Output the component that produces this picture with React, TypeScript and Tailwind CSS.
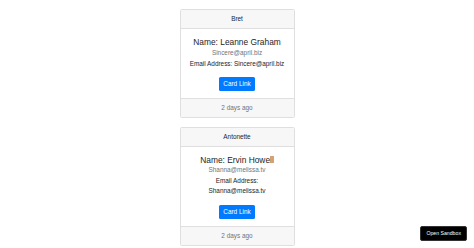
const users = [
  { username: "Bret", name: "Leanne Graham", email: "Sincere@april.biz" },
  { username: "Antonette", name: "Ervin Howell", email: "Shanna@melissa.tv" },
];

function UserCard({ username, name, email }: { username: string; name: string; email: string }) {
  return (
    <div className="mb-[8.5px] flex w-[115px] flex-col rounded-[1.6px] border border-[#dfdfdf] bg-white text-center text-[6.4px] leading-[1.5] text-[#212529]">
      <div className="border-b border-[#dfdfdf] bg-[#f7f7f7] px-[7px] py-[4.2px]">{username}</div>
      <div className="px-[7px] pt-[8px] pb-[7.2px]">
        <h5 className="mb-[1.5px] text-[8.4px] font-normal leading-[1.2]">Name: {name}</h5>
        <h6 className="mb-[2.4px] text-[6.4px] font-normal leading-[1.2] text-[#6c757d]">{email}</h6>
        <p className="mb-[8px] leading-[1.6]">Email Address: {email}</p>
        <a
          href="#"
          className="inline-block rounded-[1.6px] bg-[#007bff] px-[4.8px] py-[2.4px] text-[6.4px] leading-[1.5] text-white"
        >
          Card Link
        </a>
      </div>
      <div className="border-t border-[#dfdfdf] bg-[#f7f7f7] px-[7px] py-[4px] text-[#6c757d]">2 days ago</div>
    </div>
  );
}

export default function App() {
  return (
    <div className="min-h-[248px] bg-white font-['Liberation_Sans',Arial,sans-serif]">
      <div className="flex flex-col items-center pt-[9px]">
        {users.map((u) => (
          <UserCard key={u.username} {...u} />
        ))}
      </div>
      <button className="fixed right-[7px] bottom-[7px] rounded-[2px] border border-[#333] bg-black px-[5px] py-[3.5px] text-[5.2px] leading-[1.2] text-white">
        Open Sandbox
      </button>
    </div>
  );
}
